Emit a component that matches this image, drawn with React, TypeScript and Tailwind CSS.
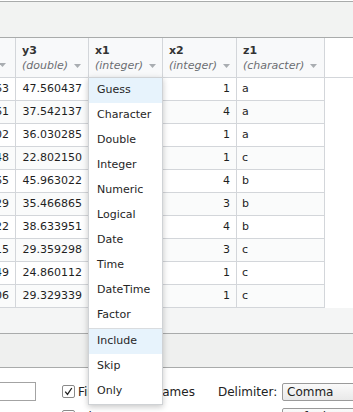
import React from "react";

type Col = { name: string; type: string; width: string; align: "left" | "right" };

const COLS: Col[] = [
  { name: "", type: "", width: "w-[16px]", align: "right" },
  { name: "y3", type: "(double)", width: "w-[73px]", align: "right" },
  { name: "x1", type: "(integer)", width: "w-[74px]", align: "right" },
  { name: "x2", type: "(integer)", width: "w-[74px]", align: "right" },
  { name: "z1", type: "(character)", width: "w-[88px]", align: "left" },
];

const ROWS = [
  ["63", "47.560437", "2", "1", "a"],
  ["61", "37.542137", "3", "4", "a"],
  ["02", "36.030285", "1", "1", "a"],
  ["48", "22.802150", "4", "1", "c"],
  ["65", "45.963022", "2", "4", "b"],
  ["29", "35.466865", "1", "3", "b"],
  ["22", "38.633951", "3", "4", "b"],
  ["15", "29.359298", "2", "3", "c"],
  ["49", "24.860112", "4", "1", "c"],
  ["06", "29.329339", "1", "1", "c"],
];

const MENU_TOP = ["Guess", "Character", "Double", "Integer", "Numeric", "Logical", "Date", "Time", "DateTime", "Factor"];
const MENU_BOTTOM = ["Include", "Skip", "Only"];

const Arrow = () => (
  <svg width="7" height="4" viewBox="0 0 7 4" className="shrink-0">
    <path d="M0 0 L7 0 L3.5 4 Z" fill="#a9adb1" />
  </svg>
);

const Check = ({ checked }: { checked: boolean }) => (
  <div className="w-[13px] h-[13px] shrink-0 rounded-[2px] border border-[#8a8a8a] bg-white flex items-center justify-center">
    {checked && (
      <svg width="9" height="9" viewBox="0 0 9 9">
        <path d="M1.2 4.6 L3.5 7.4 L7.8 1" stroke="#222" strokeWidth="1.3" fill="none" />
      </svg>
    )}
  </div>
);

const HeaderCell = ({ col, idx }: { col: Col; idx: number }) => (
  <div className={`${col.width} shrink-0 h-full border-r border-[#d3d6da] bg-[#f8f9fa] overflow-hidden`}>
    {idx === 0 ? (
      <div className="h-full flex justify-end pr-[9px] pt-[25px]">
        <Arrow />
      </div>
    ) : (
      <div className="pl-[6px] pt-[5px] leading-[15px] whitespace-nowrap">
        <div className="font-bold text-[#333]">{col.name}</div>
        <div className="flex items-center gap-[6px]">
          <span className="italic text-[#6b6e72]">{col.type}</span>
          <Arrow />
        </div>
      </div>
    )}
  </div>
);

export default function App() {
  return (
    <div className="relative w-[353px] h-[412px] overflow-hidden bg-white font-['DejaVu_Sans',sans-serif] text-[11px] text-[#1f1f1f]">
      <div className="mt-px h-[37px] border-t border-b border-[#a9abab] bg-[#f2f3f2]" />

      {/* table */}
      <div className="flex h-[40px] border-b border-[#d3d6da]">
        {COLS.map((c, i) => (
          <HeaderCell key={i} col={c} idx={i} />
        ))}
        <div className="flex-1" />
      </div>
      {ROWS.map((r, ri) => (
        <div key={ri} className={`flex h-[23px] ${ri % 2 === 1 ? "bg-[#fafbfb]" : "bg-white"}`}>
          {COLS.map((c, ci) => (
            <div
              key={ci}
              className={`${c.width} shrink-0 h-full border-r border-b border-[#d3d6da] flex items-center overflow-hidden whitespace-nowrap ${
                c.align === "right" ? "justify-end pr-[6px]" : "pl-[5px]"
              }`}
            >
              {r[ci]}
            </div>
          ))}
          <div className="flex-1 bg-white" />
        </div>
      ))}

      <div className="h-[26px] bg-[#f4f5f5] border-b border-[#a9abab]" />
      <div className="h-[34px] bg-[#eff0ef] border-b border-[#a9abab]" />

      {/* options form */}
      <div className="text-[12px] text-[#222] pt-[14px] flex flex-col gap-[6px]">
        <div className="flex items-center h-[19px]">
          <div className="-ml-[20px] w-[56px] h-[19px] border border-[#a3a3a3] bg-white shrink-0" />
          <div className="ml-[26px] w-[156px] flex items-center gap-[3px] shrink-0">
            <Check checked />
            <span className="whitespace-nowrap">First Row as Names</span>
          </div>
          <span className="w-[64px] shrink-0">Delimiter:</span>
          <div className="w-[110px] shrink-0 h-[18px] border border-[#9a9a9a] rounded-[2px] bg-gradient-to-b from-[#fafafa] to-[#e9e9e9] pl-[4px] flex items-center whitespace-nowrap">
            Comma
          </div>
        </div>
        <div className="flex items-center h-[19px]">
          <div className="w-[36px] shrink-0" />
          <div className="ml-[26px] w-[156px] flex items-center gap-[3px] shrink-0">
            <Check checked={false} />
            <span className="whitespace-nowrap">Trim Spaces</span>
          </div>
          <span className="w-[64px] shrink-0">Quote:</span>
          <div className="w-[110px] shrink-0 h-[18px] border border-[#9a9a9a] rounded-[2px] bg-gradient-to-b from-[#fafafa] to-[#e9e9e9] pl-[4px] flex items-center whitespace-nowrap">
            Default
          </div>
        </div>
      </div>

      {/* column type menu */}
      <div className="absolute left-[88px] top-[77px] w-[75px] bg-white border border-[#cfd2d5] shadow-[0_2px_6px_rgba(0,0,0,0.22)] text-[#262626]">
        {MENU_TOP.map((m) => (
          <div key={m} className={`h-[25px] flex items-center pl-[8px] ${m === "Guess" ? "bg-[#e7f3fc]" : ""}`}>
            {m}
          </div>
        ))}
        <div className="h-px bg-[#d9dcdf]" />
        {MENU_BOTTOM.map((m) => (
          <div key={m} className={`h-[25px] flex items-center pl-[8px] ${m === "Include" ? "bg-[#e7f3fc]" : ""}`}>
            {m}
          </div>
        ))}
      </div>
    </div>
  );
}
